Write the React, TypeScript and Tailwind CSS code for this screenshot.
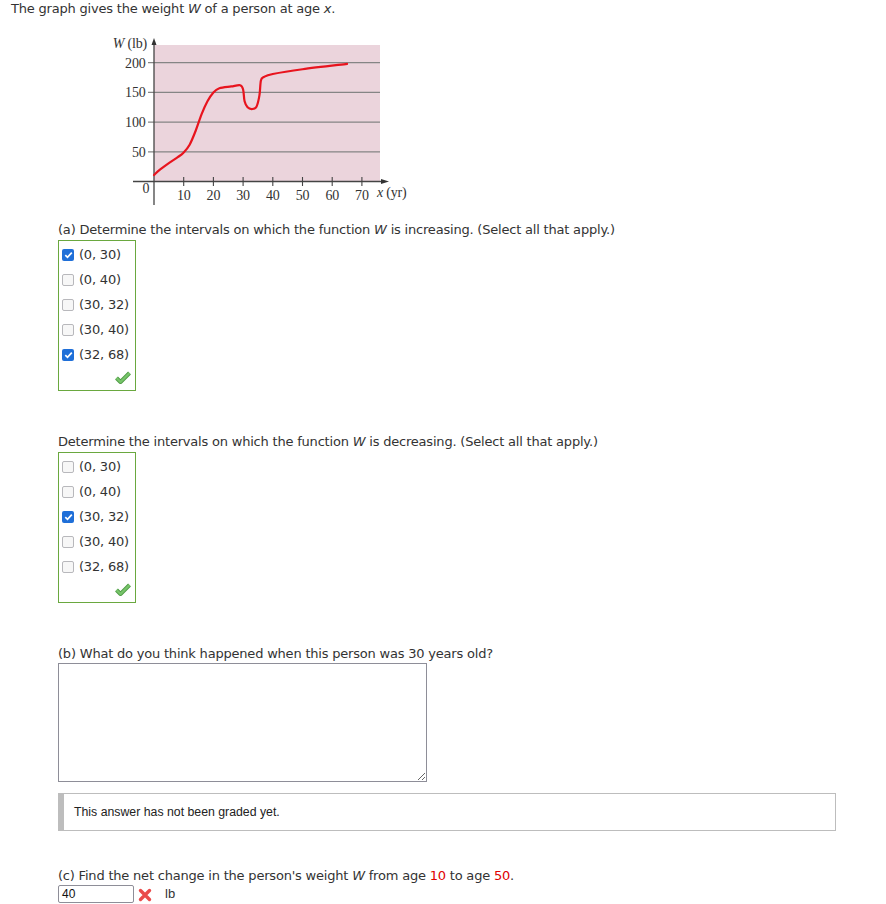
import React from 'react';

const ink = 'text-[#333333]';

// age/weight samples read off the curve
const curve: [number, number][] = [
  [0, 11], [2, 20], [5, 31], [8, 41], [10, 49], [12, 62], [14, 85], [16, 113], [18, 135], [20, 150], [22, 157],
  [26, 160], [29, 162], [30, 155], [30.5, 135], [31.5, 125], [33, 122], [34.5, 126],
  [35.5, 145], [36, 170], [37, 176], [40, 181], [50, 189], [65, 198],
];

const px = (a: number) => 154 + 2.97 * a;
const py = (w: number) => 181.5 - 0.594 * w;

const smoothPath = (pts: [number, number][]) => {
  const p = pts.map(([a, w]) => [px(a), py(w)]);
  let d = `M${p[0][0]},${p[0][1]}`;
  for (let i = 0; i < p.length - 1; i++) {
    const p0 = p[i - 1] || p[i];
    const p1 = p[i];
    const p2 = p[i + 1];
    const p3 = p[i + 2] || p2;
    const c1x = p1[0] + (p2[0] - p0[0]) / 6;
    const c1y = p1[1] + (p2[1] - p0[1]) / 6;
    const c2x = p2[0] - (p3[0] - p1[0]) / 6;
    const c2y = p2[1] - (p3[1] - p1[1]) / 6;
    d += ` C${c1x},${c1y} ${c2x},${c2y} ${p2[0]},${p2[1]}`;
  }
  return d;
};

const serif = "'Liberation Serif', 'Times New Roman', serif";

const Graph: React.FC = () => {
  const grid = [50, 100, 150, 200];
  const ages = [10, 20, 30, 40, 50, 60, 70];
  return (
    <svg width="320" height="180" viewBox="100 30 320 180" className="block ml-[100px]">
      <rect x="154" y="45" width="226" height="136.5" fill="#ebd4dc" />
      {grid.map((w) => (
        <g key={w}>
          <line x1="148" x2="380" y1={py(w)} y2={py(w)} stroke="#858585" strokeWidth="1.2" />
          <text x="145.5" y={py(w) + 5} textAnchor="end" fontSize="14" fontFamily={serif} fill="#333">
            {w}
          </text>
        </g>
      ))}
      {/* axes */}
      <line x1="154" x2="154" y1="42" y2="205" stroke="#444" strokeWidth="1.3" />
      <polygon points="154,38 151.5,45 156.5,45" fill="#333" />
      <line x1="133" x2="384" y1="181.5" y2="181.5" stroke="#444" strokeWidth="1.3" />
      <polygon points="389,181.5 381,179 381,184" fill="#333" />
      {ages.map((a) => (
        <g key={a}>
          <line x1={px(a)} x2={px(a)} y1="177" y2="186" stroke="#444" strokeWidth="1.1" />
          <text x={px(a)} y="200" textAnchor="middle" fontSize="14" fontFamily={serif} fill="#333">
            {a}
          </text>
        </g>
      ))}
      <text x="146" y="193" textAnchor="middle" fontSize="14" fontFamily={serif} fill="#333">0</text>
      <text x="377" y="197" fontSize="14" fontFamily={serif} fill="#333">
        <tspan fontStyle="italic">x</tspan> (yr)
      </text>
      <text x="147" y="48" textAnchor="end" fontSize="14" fontFamily={serif} fill="#333">
        <tspan fontStyle="italic">W</tspan> (lb)
      </text>
      <path d={smoothPath(curve)} fill="none" stroke="#e8141e" strokeWidth="2.2" strokeLinecap="round" />
    </svg>
  );
};

const Box: React.FC<{ checked: boolean }> = ({ checked }) =>
  checked ? (
    <span className="w-[12px] h-[12px] rounded-[2px] bg-[#1f6fd8] flex items-center justify-center shrink-0">
      <svg width="9" height="8" viewBox="0 0 9 8">
        <path d="M1.3 4.2 L3.5 6.3 L7.8 1.6" fill="none" stroke="#fff" strokeWidth="1.7" />
      </svg>
    </span>
  ) : (
    <span className="w-[12px] h-[12px] rounded-[2px] border border-[#b8b8bc] bg-[#f7f7f7] shrink-0" />
  );

const GreenCheck: React.FC = () => (
  <svg width="16" height="13" viewBox="0 0 16 13">
    <path d="M1.5 7 L5.5 11 L14.5 2" fill="none" stroke="#4e9a44" strokeWidth="4" strokeLinejoin="round" />
    <path d="M1.5 7 L5.5 11 L14.5 2" fill="none" stroke="#77c46a" strokeWidth="2.4" strokeLinejoin="round" />
  </svg>
);

const options = ['(0, 30)', '(0, 40)', '(30, 32)', '(30, 40)', '(32, 68)'];

const ChoiceBox: React.FC<{ picked: number[] }> = ({ picked }) => (
  <div className="w-[78px] h-[151px] border border-[#6aa83f] pl-[3px] pt-[1px] flex flex-col">
    {options.map((o, i) => (
      <div key={o} className="h-[25px] flex items-center gap-[5px]">
        <Box checked={picked.includes(i)} />
        <span className="leading-[16px]">{o}</span>
      </div>
    ))}
    <div className="flex justify-end pr-[4px] pt-[4px]">
      <GreenCheck />
    </div>
  </div>
);

const App: React.FC = () => {
  return (
    <div className={`w-[886px] h-[904px] bg-white ${ink} text-[13px] leading-[16px] tracking-[-0.2px] font-['DejaVu_Sans',Verdana,sans-serif] overflow-hidden`}>
      <div className="pl-[11px] pt-[1px]">
        The graph gives the weight <i>W</i> of a person at age <i>x</i>.
      </div>
      <div className="mt-[13px]">
        <Graph />
      </div>

      <div className="pl-[58px] mt-[12px]">
        <div>(a) Determine the intervals on which the function <i>W</i> is increasing. (Select all that apply.)</div>
        <div className="mt-[2px]">
          <ChoiceBox picked={[0, 4]} />
        </div>

        <div className="mt-[43px]">Determine the intervals on which the function <i>W</i> is decreasing. (Select all that apply.)</div>
        <div className="mt-[2px]">
          <ChoiceBox picked={[2]} />
        </div>

        <div className="mt-[43px]">(b) What do you think happened when this person was 30 years old?</div>
        <textarea className="block w-[369px] h-[119px] border border-[#8e8e98] mt-[1px] resize" />

        <div className="mt-[11px] w-[778px] h-[38px] border border-[#bdbdbd] border-l-[6px] flex items-center pl-[10px] font-['Liberation_Sans',Arial,sans-serif] text-[12.3px] tracking-normal text-[#222]">
          This answer has not been graded yet.
        </div>

        <div className="mt-[37px]">
          (c) Find the net change in the person's weight <i>W</i> from age <span className="text-[#e00000]">10</span> to age{' '}
          <span className="text-[#e00000]">50</span>.
        </div>
        <div className="flex items-center mt-[1px]">
          <div className="w-[76px] h-[18px] border border-[#8e8e98] rounded-[2px] pl-[3px] flex items-center font-['Liberation_Sans',Arial,sans-serif] text-[12px] tracking-normal text-[#111]">
            40
          </div>
          <svg width="14" height="14" viewBox="0 0 14 14" className="ml-[4px] mt-[2px]">
            <path d="M2.5 2.5 L11.5 11.5 M11.5 2.5 L2.5 11.5" stroke="#ea4b4b" strokeWidth="3.4" strokeLinecap="round" />
          </svg>
          <span className="ml-[13px] font-['Liberation_Sans',Arial,sans-serif] text-[13px] tracking-normal">lb</span>
        </div>
      </div>
    </div>
  );
};

export default App;
